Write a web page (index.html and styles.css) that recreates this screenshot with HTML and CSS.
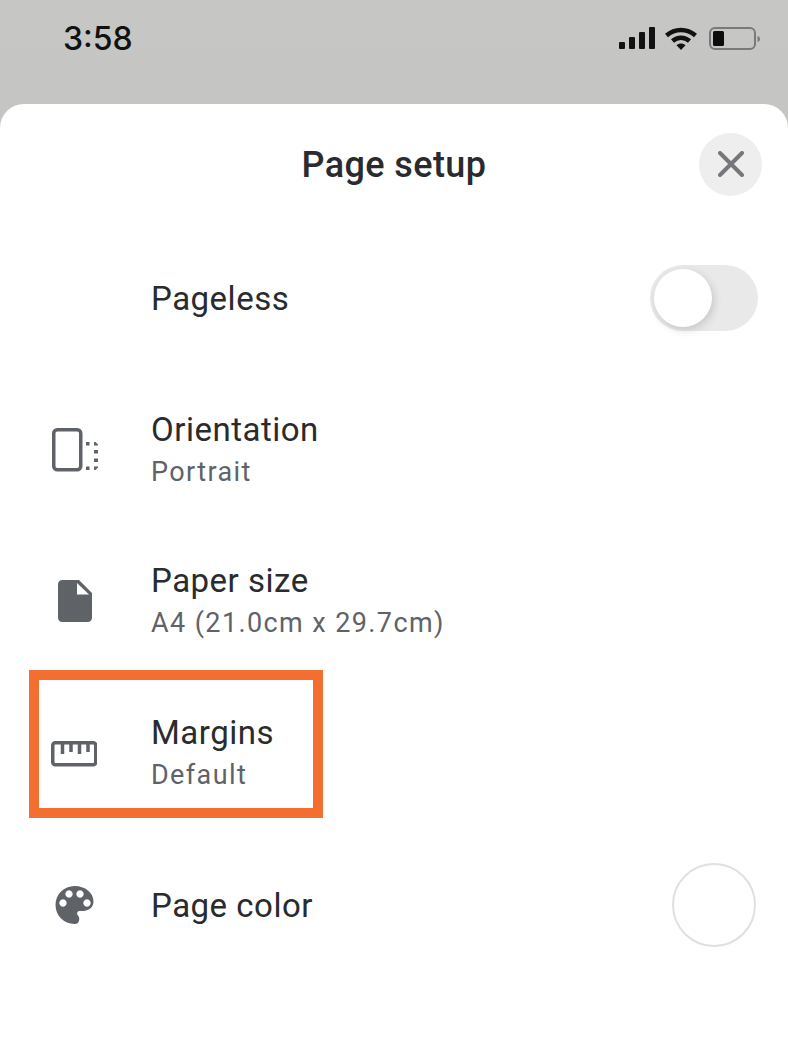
FILE: index.html
```html
<!DOCTYPE html>
<html lang="en">
<head>
  <meta charset="UTF-8">
  <meta name="viewport" content="width=device-width, initial-scale=1.0">
  <title>Page setup</title>
  <link rel="stylesheet" href="styles.css">
</head>
<body>
  <div class="status-bar">
    <span class="time">3:58</span>
    <div class="status-icons">
      <svg width="37" height="23" viewBox="0 0 37 23">
        <rect x="0" y="15" width="6" height="7" rx="1" fill="#111"/>
        <rect x="10" y="10" width="6" height="12" rx="1" fill="#111"/>
        <rect x="20" y="5" width="6" height="17" rx="1" fill="#111"/>
        <rect x="30" y="0" width="6" height="22" rx="1" fill="#111"/>
      </svg>
      <svg class="wifi" width="32" height="24" viewBox="0 0 32 24">
        <path d="M1.500 8.500C10 1 22 1 30.500 8.500" fill="none" stroke="#111" stroke-width="4.500"/>
        <path d="M7.500 14C12.500 9.500 19.500 9.500 24.500 14" fill="none" stroke="#111" stroke-width="4.500"/>
        <path d="M11.500 18.200L16 23L20.500 18.200C18 15.800 14 15.800 11.500 18.200Z" fill="#111"/>
      </svg>
      <svg class="battery" width="52" height="25" viewBox="0 0 52 25">
        <rect x="1" y="1" width="45" height="21" rx="5" fill="none" stroke="#77797a" stroke-width="2"/>
        <rect x="4" y="4" width="11" height="15" rx="1.500" fill="#0c0c0c"/>
        <path d="M48.500 9C50.500 9.500 51 11 51 12C51 13 50.500 14.500 48.500 15Z" fill="#77797a"/>
      </svg>
    </div>
  </div>

  <div class="sheet">
    <div class="sheet-header">
      <h1 class="sheet-title">Page setup</h1>
      <button class="close-btn">
        <svg width="26" height="26" viewBox="0 0 26 26">
          <path d="M2 2L24 24M24 2L2 24" stroke="#77777b" stroke-width="4" stroke-linecap="round"/>
        </svg>
      </button>
    </div>

    <div class="row row-pageless">
      <div class="row-icon"></div>
      <div class="row-text"><div class="row-label">Pageless</div></div>
      <div class="toggle"><div class="toggle-knob"></div></div>
    </div>

    <div class="row row-orientation">
      <div class="row-icon">
        <svg width="48" height="44" viewBox="0 0 48 44" fill="#5f6368">
          <rect x="2.750" y="1.750" width="27" height="40" rx="3.500" fill="none" stroke="#5f6368" stroke-width="3.500"/>
          <rect x="35" y="14" width="3.500" height="3.500"/>
          <path d="M43 14H44.500L47 16.500V17.500H43Z"/>
          <rect x="43" y="22" width="4" height="3.500"/>
          <rect x="43" y="30.500" width="4" height="3.500"/>
          <rect x="35" y="38.500" width="3.500" height="3.500"/>
          <path d="M43 38.500H47V39.500L44.500 42H43Z"/>
        </svg>
      </div>
      <div class="row-text">
        <div class="row-label">Orientation</div>
        <div class="row-sub">Portrait</div>
      </div>
    </div>

    <div class="row row-paper">
      <div class="row-icon">
        <svg width="34" height="42" viewBox="0 0 34 42">
          <path d="M4 0H21L34 13V38C34 40 32 42 30 42H4C2 42 0 40 0 38V4C0 2 2 0 4 0Z" fill="#5f6368"/>
          <path d="M19 3L31 14.500H19Z" fill="#fff"/>
        </svg>
      </div>
      <div class="row-text">
        <div class="row-label">Paper size</div>
        <div class="row-sub">A4 (21.0cm x 29.7cm)</div>
      </div>
    </div>

    <div class="row row-margins">
      <div class="row-icon">
        <svg width="46" height="26" viewBox="0 0 46 26">
          <rect x="1.750" y="1.750" width="43" height="22" rx="2.500" fill="none" stroke="#5f6368" stroke-width="3.500"/>
          <path d="M11.500 2V13M20 2V11M28.500 2V13M37 2V11" stroke="#5f6368" stroke-width="3.500"/>
        </svg>
      </div>
      <div class="row-text">
        <div class="row-label">Margins</div>
        <div class="row-sub">Default</div>
      </div>
      <div class="highlight"></div>
    </div>

    <div class="row row-color">
      <div class="row-icon">
        <svg width="40" height="38" viewBox="0 0 40 38">
          <path fill-rule="evenodd" fill="#5f6368" d="M19.500 0C30 0 38.500 6.500 38.500 15.500C38.500 21.500 33.500 25 28 25H25C22.500 25 21.500 27 22.500 28.800C23.500 30.200 24.300 31.300 24.300 33C24.300 36 22.500 38 19.500 38C9 38 0.500 29.500 0.500 19C0.500 8.500 9 0 19.500 0ZM14 4.300a3.700 3.700 0 1 0 0.010 0ZM25 4.300a3.700 3.700 0 1 0 0.010 0ZM8 13.300a3.700 3.700 0 1 0 0.010 0ZM32 13.300a3.700 3.700 0 1 0 0.010 0Z"/>
        </svg>
      </div>
      <div class="row-text"><div class="row-label">Page color</div></div>
      <div class="color-swatch"></div>
    </div>
  </div>
</body>
</html>
```
FILE: styles.css
```css
* {
  box-sizing: border-box;
}

html, body {
  margin: 0;
  height: 100%;
}

body {
  width: 788px;
  height: 1054px;
  overflow: hidden;
  font-family: Roboto, "Noto Sans", sans-serif;
  background: linear-gradient(#c6c7c4, #bcbebb);
  display: flex;
  flex-direction: column;
}

.status-bar {
  height: 104px;
  flex: none;
  display: flex;
  justify-content: space-between;
  padding: 24px 27px 0 63px;
  align-items: flex-start;
}

.time {
  font-family: Inter, Roboto, sans-serif;
  font-size: 32px;
  line-height: 30px;
  font-weight: 500;
  color: #111;
}

.status-icons {
  display: flex;
  align-items: flex-start;
  padding-top: 3px;
}

.wifi {
  margin-left: 9px;
}

.battery {
  margin-left: 12px;
}

.sheet {
  flex: 1;
  background: #fff;
  border-radius: 24px 24px 0 0;
  padding-top: 28px;
}

.sheet-header {
  height: 64px;
  display: flex;
  align-items: center;
  justify-content: flex-end;
  padding-right: 26px;
  position: relative;
  margin-bottom: 69px;
}

.sheet-title {
  position: absolute;
  left: 0;
  right: 0;
  margin: 1px 0 0;
  text-align: center;
  font-size: 36px;
  font-weight: 500;
  letter-spacing: 0.4px;
  color: #292b2e;
}

.close-btn {
  width: 63px;
  height: 63px;
  border: none;
  border-radius: 50%;
  background: #eeeeee;
  padding: 0;
  display: flex;
  align-items: center;
  justify-content: center;
}

.row {
  display: flex;
  align-items: center;
  position: relative;
}

.row-pageless {
  height: 66px;
  padding-right: 30px;
  margin-bottom: 77px;
}

.row-orientation {
  height: 84px;
  margin-bottom: 67px;
}

.row-paper {
  height: 84px;
  margin-bottom: 68px;
}

.row-margins {
  height: 84px;
  margin-bottom: 68px;
}

.row-color {
  height: 84px;
  padding-right: 32px;
}

.row-icon {
  width: 151px;
  flex: none;
  padding-left: 51px;
  display: flex;
  align-items: center;
}

.row-paper .row-icon {
  padding-left: 58px;
}

.row-margins .row-icon {
  padding-top: 2px;
}

.row-color .row-icon {
  padding-left: 55px;
}

.row-text {
  flex: 1;
  padding-top: 2px;
}

.row-label {
  font-size: 33px;
  line-height: 42px;
  letter-spacing: 0.5px;
  color: #292b2e;
}

.row-sub {
  font-size: 27px;
  line-height: 42px;
  letter-spacing: 1.4px;
  color: #5f6368;
}

.toggle {
  width: 108px;
  height: 66px;
  border-radius: 33px;
  background: #e9e9e9;
  padding: 4px;
}

.toggle-knob {
  width: 58px;
  height: 58px;
  border-radius: 50%;
  background: #fff;
  box-shadow: 2px 3px 8px rgba(0, 0, 0, 0.15);
}

.color-swatch {
  width: 84px;
  height: 84px;
  border-radius: 50%;
  border: 2px solid #e0e0e0;
  background: #fff;
}

.highlight {
  position: absolute;
  left: 29px;
  top: -41px;
  width: 294px;
  height: 148px;
  border: 10px solid #f26f2f;
}
```
